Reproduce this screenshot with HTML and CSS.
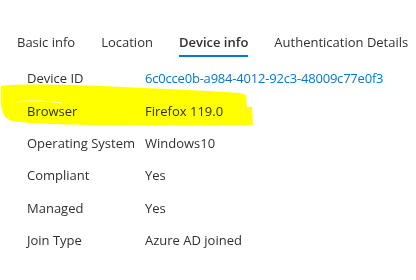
FILE: index.html
```html
<!DOCTYPE html>
<html lang="en">
<head>
    <meta charset="UTF-8">
    <title>Sign-in details</title>
    <link rel="stylesheet" href="styles.css">
</head>
<body>
    <div class="panel">
        <div class="tabs">
            <span class="tab">Basic info</span>
            <span class="tab">Location</span>
            <span class="tab active">Device info</span>
            <span class="tab">Authentication Details</span>
        </div>

        <div class="details">
            <div class="row"><span class="label">Device ID</span><a class="value link">6c0cce0b-a984-4012-92c3-48009c77e0f3</a></div>
            <div class="row"><span class="label">Browser</span><span class="value">Firefox 119.0</span></div>
            <div class="row"><span class="label">Operating System</span><span class="value">Windows10</span></div>
            <div class="row"><span class="label">Compliant</span><span class="value">Yes</span></div>
            <div class="row"><span class="label">Managed</span><span class="value">Yes</span></div>
            <div class="row"><span class="label">Join Type</span><span class="value">Azure AD joined</span></div>
        </div>
    </div>

    <!-- marker scribble over the Browser row -->
    <svg class="highlight" width="260" height="50" viewBox="0 0 260 50">
        <path d="M1 6 C20 4 60 4 120 7 C170 9 210 11 240 13 L246 15 L247 27 L252 27 L253 45 C200 45 150 46 110 45 C70 45 35 44 12 41 C5 39 1 33 1 20 Z" fill="#ffff00"/>
        <path d="M16 22 C30 20 48 21 62 23" stroke="#ffffc8" stroke-width="1" fill="none"/>
    </svg>
</body>
</html>
```

FILE: styles.css
```css
body {
    margin: 0;
    background-color: #ffffff;
    font-family: 'Open Sans', sans-serif;
    font-size: 13px;
    line-height: 18px;
    color: #323130;
}

.panel {
    padding: 33px 0 0 17px;
}

.tabs {
    display: flex;
    gap: 26px;
}

.tab {
    padding-bottom: 4px;
    border-bottom: 2px solid transparent;
    white-space: nowrap;
}

.tab.active {
    font-weight: 600;
    border-bottom-color: #0078d4;
}

.details {
    padding: 5px 0 0 10px;
}

.row {
    display: flex;
    height: 32.4px;
    align-items: center;
}

.label {
    width: 118px;
}

.link {
    color: #0078d4;
    letter-spacing: -0.2px;
}

.highlight {
    position: absolute;
    left: 0;
    top: 80px;
    mix-blend-mode: multiply;
}
```
